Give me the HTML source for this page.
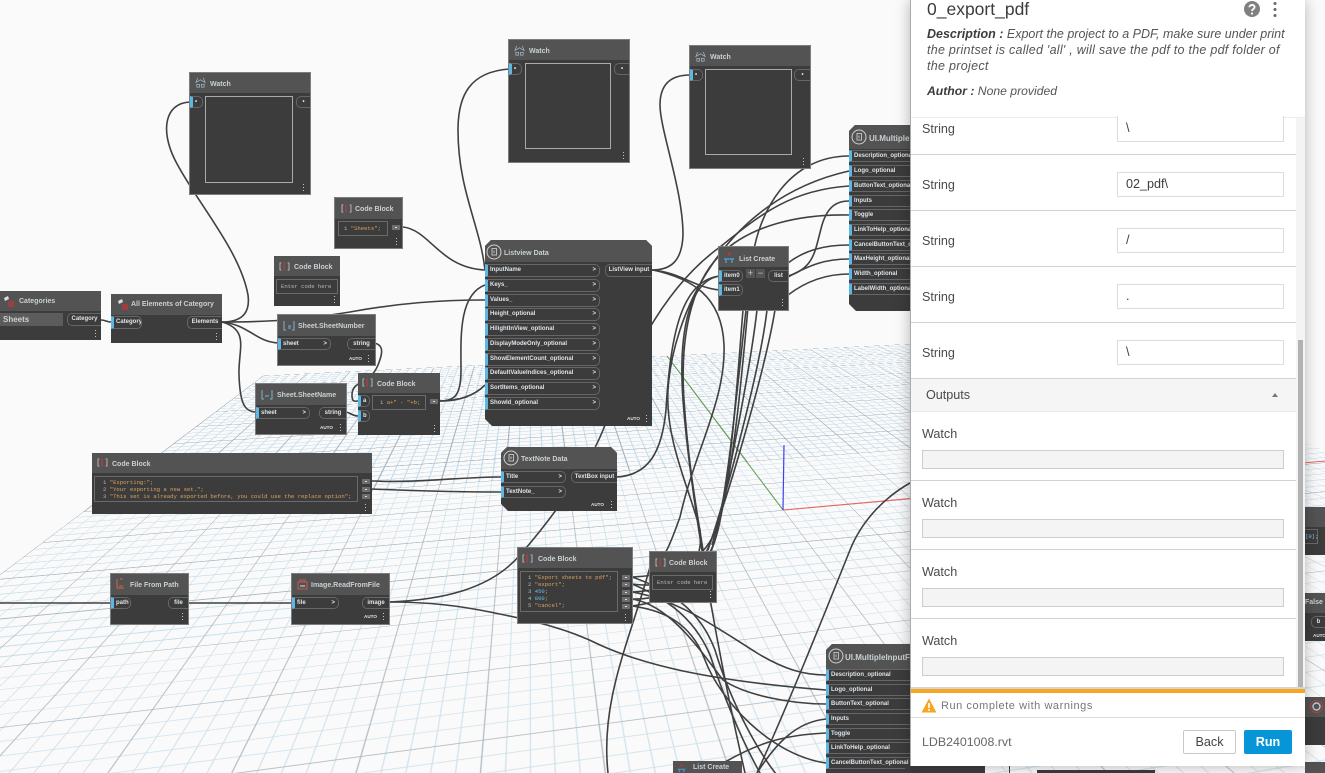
<!DOCTYPE html>
<html><head><meta charset="utf-8"><title>0_export_pdf</title>
<style>
html,body{margin:0;padding:0;width:1325px;height:773px;overflow:hidden;background:#fafafa;font-family:"Liberation Sans",sans-serif}
#root{position:relative;width:1325px;height:773px;overflow:hidden;background:#fafafa}
#grid{position:absolute;left:0;top:0;width:2000px;height:1750px;transform-origin:0 0;
transform:matrix3d(.46759,.014123,0,.00009543,-.26624,-.08741,0,-.00050234,0,0,1,0,263.03,375.78,0,1);background:#fafafa}
#grid div{position:absolute;left:0;width:2000px}
#g1{top:0;height:800px;background:linear-gradient(#a3b1bb 3px,transparent 3px) 0 0/100px 100px,linear-gradient(90deg,#a3b1bb 2px,transparent 2px) 0 0/100px 100px,linear-gradient(#c4dbe9 3px,transparent 3px) 0 0/20px 20px,linear-gradient(90deg,#c4dbe9 2px,transparent 2px) 0 0/20px 20px}
#g2{top:800px;height:400px;background:linear-gradient(#a6b4be 2.2px,transparent 2.2px) 0 0/100px 100px,linear-gradient(90deg,#a6b4be 1.5px,transparent 1.5px) 0 0/100px 100px,linear-gradient(#c8deeb 2.2px,transparent 2.2px) 0 0/20px 20px,linear-gradient(90deg,#c8deeb 1.5px,transparent 1.5px) 0 0/20px 20px}
#g3{top:1200px;height:550px;background:linear-gradient(#a9b6bf 1.4px,transparent 1.4px) 0 0/100px 100px,linear-gradient(90deg,#a9b6bf 1px,transparent 1px) 0 0/100px 100px,linear-gradient(#cde1ec 1.4px,transparent 1.4px) 0 0/20px 20px,linear-gradient(90deg,#cde1ec 1px,transparent 1px) 0 0/20px 20px}
svg.w{position:absolute;left:0;top:0}
.n,.h,.pl,.pr,.t,.d,.a,.box,.code,.out,.ic,.dd,.btn{position:absolute;display:block}
.n{background:#3c3c3c}
.s{outline:1px solid #7d7d7d;outline-offset:-.5px}
.c{clip-path:polygon(6px 0,calc(100% - 6px) 0,100% 6px,100% 100%,7px 100%,0 calc(100% - 7px),0 6px)}
.h{background:#535353}
.t{font-size:7px;font-weight:bold;color:#c9d0d4;white-space:nowrap;line-height:10px;margin-top:2px}
.pl,.pr{height:12px;box-sizing:border-box;border:1px solid #666;font-size:6px;font-weight:bold;color:#dde3e8;line-height:11px;white-space:nowrap;overflow:hidden}
.pl{border-left:3px solid #5db7e2;border-radius:0 5px 5px 0;padding-left:2px}
.pr{border-right:0;border-radius:5px 0 0 5px;text-align:center}
.pl u{position:absolute;right:3px;top:0;text-decoration:none}
.d{width:1.4px;height:1.4px;background:#c4c4c4;box-shadow:0 3px #c4c4c4,0 -3px #c4c4c4}
.a{font-size:4.6px;font-weight:bold;color:#dfe5ea;line-height:6px}
.box{box-sizing:border-box;border:1px solid #6a6a6a}
.wb{border:1px solid #aaa}
.code{font-family:"Liberation Mono",monospace;font-size:5.6px;line-height:7px;color:#dba35f;white-space:pre}
.code b{font-weight:normal;color:#b8b8b8}
.code em{font-style:normal;color:#5fc0ea}
.out{width:8px;height:5px;background:#6e6e6e}
.out:after{content:"";position:absolute;left:3px;top:2px;width:2px;height:1px;background:#ddd}
.ic{overflow:visible}
.dd{background:#5c5c5c;color:#d0d0d0;font-size:8px;font-weight:bold;line-height:14px}
.btn{background:#555;width:9px;height:9px;color:#ccc;font-size:9px;line-height:8px;text-align:center}
#panel{position:absolute;left:910px;top:0;width:395px;height:766px;background:#fff;border-left:1px solid #ababab;box-sizing:border-box;box-shadow:0 0 14px rgba(0,0,0,.28);color:#3c3c3c;overflow:hidden}
#panel div,#panel span{position:absolute;white-space:nowrap}
.sep{left:0;width:385px;height:1px;background:#d2d2d2}
.lb{left:11px;font-size:12.6px;line-height:16px;color:#4a4a4a}
.inp{left:206px;width:167px;height:25px;border:1px solid #dcdcdc;box-sizing:border-box;font-size:12.6px;line-height:23px;padding-left:8px;color:#3c3c3c;background:#fff}
.fld{left:11px;width:362px;height:19px;background:#f4f4f4;border:1px solid #cdcdcd;box-sizing:border-box}
.dl{left:16px;font-size:12.5px;line-height:16px;font-style:italic;color:#555}
</style></head><body><div id="root">
<div id="grid"><div id="g1"></div><div id="g2"></div><div id="g3"></div></div>
<svg class="w" width="1325" height="773" viewBox="0 0 1325 773" fill="none">
<path d="M783 510L667 356" stroke="#5f9e50" stroke-width="1"/>
<path d="M783 510L1325 461" stroke="#f2605c" stroke-width="1"/>
<path d="M783 510L784 445" stroke="#4040ee" stroke-width="1.2"/>
<g stroke="#404040" stroke-width="1.6">
<path d="M222 322C245 322 250 310 248 295C240 250 195 200 175 160C160 130 165 103 190 102"/>
<path d="M222 322C250 325 255 342 279 343"/>
<path d="M222 322C250 330 238 350 239 375C240 405 245 412 257 412"/>
<path d="M222 322C270 322 300 320 350 312C400 303 440 300 485 300"/>
<path d="M403 227C430 230 440 268 485 270"/>
<path d="M509 69C470 72 458 95 458 130C458 190 480 225 485 270"/>
<path d="M440 401C455 401 461 395 461 370C461 340 458 295 485 285"/>
<path d="M440 401C460 401 475 395 485 385"/>
<path d="M374 343C385 345 382 355 378 365C370 385 352 380 352 395C352 403 355 401 358 401"/>
<path d="M345 412C350 412 352 416 358 416"/>
<path d="M101 320C106 320 106 322 111 322"/>
<path d="M372 481C420 483 460 477 501 477"/>
<path d="M372 489C420 491 460 492 501 492"/>
<path d="M617 477C650 475 662 450 666 410C670 340 680 280 720 276"/>
<path d="M652 270C680 272 695 288 720 290"/>
<path d="M652 270C670 270 682 262 683 235C683 190 660 130 660 105C660 85 670 75 690 75"/>
<path d="M653 270C690 278 722 295 724 345C726 400 695 450 680 517C670 545 665 560 650 567C630 640 600 700 608 773"/>
<path d="M720 276C690 280 678 330 683 400C688 470 710 620 745 773"/>
<path d="M632 577C680 575 705 560 718 525C735 470 745 340 752 262C758 210 790 156 849 156"/>
<path d="M632 584C675 590 705 570 700 530C690 490 665 440 668 390C672 320 720 200 849 171"/>
<path d="M389 602C440 600 490 590 520 555C555 515 590 465 605 425C625 370 660 290 720 247C760 215 790 190 849 186"/>
<path d="M849 215C800 214 750 225 720 255C690 285 680 340 684 400C688 460 695 500 703 550C705 570 680 590 632 592"/>
<path d="M632 599C680 600 708 570 718 530C732 470 738 370 743 310"/>
<path d="M632 606C680 600 705 575 715 540C728 490 738 380 746 310"/>
<path d="M712 545C725 500 750 370 757 310"/>
<path d="M708 550C725 500 760 370 767 310"/>
<path d="M705 555C725 510 765 370 775 310"/>
<path d="M788 276C815 268 815 250 822 225C828 205 838 201 849 201"/>
<path d="M788 263C805 250 825 245 849 245"/>
<path d="M788 277C810 265 825 259 849 259"/>
<path d="M788 295C805 282 825 274 849 274"/>
<path d="M632 592C680 600 720 630 757 653C785 670 805 675 826 675"/>
<path d="M632 599C670 605 700 650 723 680C745 695 790 704 826 704"/>
<path d="M632 606C660 610 690 620 705 660C720 700 770 755 826 763"/>
<path d="M632 577C670 590 700 610 715 650C730 700 760 760 790 790"/>
<path d="M632 584C670 600 695 620 710 655C725 700 745 750 770 790"/>
<path d="M389 602C430 602 460 606 490 612C540 622 570 630 600 645C640 663 700 680 826 690"/>
<path d="M725 762C755 745 780 735 826 733"/>
<path d="M757 773C775 745 795 722 826 719"/>
<path d="M910 483C880 500 860 525 850 550C820 625 790 700 757 773"/>
<path d="M188 603H292"/>
<path d="M0 603H111"/>
</g>
<defs>
<symbol id="cb" viewBox="0 0 12 10"><path d="M2.5 1H1V9H2.5M9.5 1H11V9H9.5" stroke="#bdbdbd" fill="none"/><path d="M5.5 .5V9.5" stroke="#c23b3b" stroke-width="1.2"/></symbol>
<symbol id="wa" viewBox="0 0 12 12"><path d="M3 1L1 6L6 3L11 6L9 1M2 8H5V11H2ZM7 8H10V11H7Z" stroke="#9fb8c8" stroke-width=".8" fill="none"/></symbol>
<symbol id="ci" viewBox="0 0 16 16"><circle cx="8" cy="8" r="7" stroke="#d0d0d0" fill="none"/><path d="M6 4.5H10.5V11H6ZM8 6.5V9" stroke="#bbb" fill="none"/></symbol>
<symbol id="lc" viewBox="0 0 12 12"><path d="M6 0V4M4 2H8" stroke="#c33"/><path d="M1 7H11M3 7V11M9 7V11" stroke="#4a9ad4" stroke-width="1.4"/></symbol>
<symbol id="re" viewBox="0 0 12 12"><path d="M1 3L5 1L6 4L2 6Z" fill="#ddd"/><path d="M5 7H11M5 9H11M5 11H11" stroke="#c33" stroke-width="1.2"/></symbol>
</defs>
</svg>

<!-- Watch nodes -->
<div class="n s" style="left:190px;top:73px;width:120px;height:121px"></div><div class="h" style="left:190px;top:73px;width:120px;height:20px"></div>
<svg class="ic" style="left:195px;top:77px" width="11" height="11"><use href="#wa"/></svg><span class="t" style="left:210px;top:78px">Watch</span>
<span class="pl" style="left:190px;top:96px;width:13px">•</span><span class="pr" style="left:296px;top:96px;width:14px">•</span>
<div class="box wb" style="left:205px;top:96px;width:88px;height:87px"></div><span class="d" style="left:303px;top:187px"></span>

<div class="n s" style="left:509px;top:40px;width:120px;height:122px"></div><div class="h" style="left:509px;top:40px;width:120px;height:20px"></div>
<svg class="ic" style="left:514px;top:45px" width="11" height="11"><use href="#wa"/></svg><span class="t" style="left:529px;top:45px">Watch</span>
<span class="pl" style="left:509px;top:63px;width:13px">•</span><span class="pr" style="left:614px;top:63px;width:15px">•</span>
<div class="box wb" style="left:525px;top:63px;width:86px;height:86px"></div><span class="d" style="left:623px;top:155px"></span>

<div class="n s" style="left:690px;top:46px;width:120px;height:122px"></div><div class="h" style="left:690px;top:46px;width:120px;height:20px"></div>
<svg class="ic" style="left:695px;top:51px" width="11" height="11"><use href="#wa"/></svg><span class="t" style="left:710px;top:51px">Watch</span>
<span class="pl" style="left:690px;top:69px;width:13px">•</span><span class="pr" style="left:794px;top:69px;width:16px">•</span>
<div class="box wb" style="left:705px;top:69px;width:87px;height:86px"></div><span class="d" style="left:803px;top:161px"></span>

<!-- Categories -->
<div class="n" style="left:0;top:291px;width:101px;height:49px"></div><div class="h" style="left:0;top:291px;width:101px;height:20px"></div>
<svg class="ic" style="left:3px;top:295px" width="12" height="12"><use href="#re"/></svg><span class="t" style="left:19px;top:295px">Categories</span>
<span class="dd" style="left:0;top:313px;width:63px;height:13px;padding-left:3px;box-sizing:border-box">Sheets</span>
<span class="pr" style="left:67px;top:313px;width:34px;height:13px">Category</span><span class="d" style="left:95px;top:333px"></span>

<!-- All Elements -->
<div class="n" style="left:111px;top:294px;width:111px;height:49px"></div><div class="h" style="left:111px;top:294px;width:111px;height:21px"></div>
<svg class="ic" style="left:117px;top:298px" width="12" height="12"><use href="#re"/></svg><span class="t" style="left:131px;top:298px">All Elements of Category</span>
<span class="pl" style="left:111px;top:316px;width:31px;height:13px">Category</span><span class="pr" style="left:187px;top:316px;width:35px;height:13px">Elements</span><span class="d" style="left:216px;top:336px"></span>

<!-- Code Blocks upper -->
<div class="n s" style="left:335px;top:198px;width:67px;height:50px"></div><div class="h" style="left:335px;top:198px;width:67px;height:21px"></div>
<svg class="ic" style="left:341px;top:204px" width="11" height="9"><use href="#cb"/></svg><span class="t" style="left:355px;top:203px">Code Block</span>
<div class="box" style="left:338px;top:221px;width:50px;height:15px"></div><span class="code" style="left:344px;top:225px"><b>1</b> "Sheets";</span>
<span class="out" style="left:392px;top:225px"></span><span class="d" style="left:396px;top:241px"></span>

<div class="n" style="left:274px;top:256px;width:66px;height:50px"></div><div class="h" style="left:274px;top:256px;width:66px;height:20px"></div>
<svg class="ic" style="left:279px;top:262px" width="11" height="9"><use href="#cb"/></svg><span class="t" style="left:294px;top:261px">Code Block</span>
<div class="box" style="left:276px;top:279px;width:62px;height:15px"></div><span class="code" style="left:281px;top:283px"><b>Enter code here</b></span><span class="d" style="left:334px;top:299px"></span>

<!-- Sheet number/name -->
<div class="n s" style="left:278px;top:315px;width:97px;height:50px"></div><div class="h" style="left:278px;top:315px;width:97px;height:21px"></div>
<svg class="ic" style="left:283px;top:320px" width="12" height="11"><path d="M1 1V10H3M11 1V10H9M5 6H8M5 8H8" stroke="#7fb0d0" fill="none"/></svg><span class="t" style="left:298px;top:320px">Sheet.SheetNumber</span>
<span class="pl" style="left:278px;top:338px;width:53px">sheet<u>&gt;</u></span><span class="pr" style="left:347px;top:338px;width:28px">string</span>
<span class="a" style="left:349px;top:356px">AUTO</span><span class="d" style="left:368px;top:358px"></span>

<div class="n s" style="left:256px;top:384px;width:90px;height:50px"></div><div class="h" style="left:256px;top:384px;width:90px;height:21px"></div>
<svg class="ic" style="left:261px;top:389px" width="12" height="11"><path d="M1 1V10H3M11 1V10H9M4 7H8" stroke="#7fb0d0" fill="none"/></svg><span class="t" style="left:277px;top:389px">Sheet.SheetName</span>
<span class="pl" style="left:256px;top:407px;width:54px">sheet<u>&gt;</u></span><span class="pr" style="left:319px;top:407px;width:27px">string</span>
<span class="a" style="left:320px;top:425px">AUTO</span><span class="d" style="left:340px;top:427px"></span>

<div class="n" style="left:358px;top:373px;width:82px;height:62px"></div><div class="h" style="left:358px;top:373px;width:82px;height:20px"></div>
<svg class="ic" style="left:362px;top:378px" width="11" height="9"><use href="#cb"/></svg><span class="t" style="left:377px;top:378px">Code Block</span>
<span class="pl" style="left:358px;top:395px;width:12px;padding-left:2px">a</span><span class="pl" style="left:358px;top:410px;width:12px;padding-left:2px">b</span>
<div class="box" style="left:372px;top:395px;width:54px;height:15px"></div><span class="code" style="left:380px;top:399px"><b>1</b> a+" - "+b;</span>
<span class="out" style="left:430px;top:399px"></span><span class="d" style="left:434px;top:428px"></span>

<!-- ListView -->
<div class="n c" style="left:485px;top:240px;width:167px;height:186px"><div class="h" style="left:0;top:0;width:167px;height:22px"></div></div>
<svg class="ic" style="left:486px;top:244px" width="16" height="16"><use href="#ci"/></svg><span class="t" style="left:504px;top:247px">Listview Data</span>
<span class="pl" style="left:485px;top:264px;width:115px;height:13px">InputName<u>&gt;</u></span>
<span class="pl" style="left:485px;top:279px;width:115px;height:13px">Keys_<u>&gt;</u></span>
<span class="pl" style="left:485px;top:294px;width:115px;height:13px">Values_<u>&gt;</u></span>
<span class="pl" style="left:485px;top:308px;width:115px;height:13px">Height_optional<u>&gt;</u></span>
<span class="pl" style="left:485px;top:323px;width:115px;height:13px">HilightInView_optional<u>&gt;</u></span>
<span class="pl" style="left:485px;top:338px;width:115px;height:13px">DisplayModeOnly_optional<u>&gt;</u></span>
<span class="pl" style="left:485px;top:353px;width:115px;height:13px">ShowElementCount_optional<u>&gt;</u></span>
<span class="pl" style="left:485px;top:367px;width:115px;height:13px">DefaultValueIndices_optional<u>&gt;</u></span>
<span class="pl" style="left:485px;top:382px;width:115px;height:13px">SortItems_optional<u>&gt;</u></span>
<span class="pl" style="left:485px;top:397px;width:115px;height:13px">ShowId_optional<u>&gt;</u></span>
<span class="pr" style="left:605px;top:264px;width:47px;height:13px">ListView input</span>
<span class="a" style="left:627px;top:416px">AUTO</span><span class="d" style="left:646px;top:418px"></span>

<!-- List Create -->
<div class="n s" style="left:719px;top:247px;width:69px;height:63px"></div><div class="h" style="left:719px;top:247px;width:69px;height:20px"></div>
<svg class="ic" style="left:723px;top:252px" width="12" height="12"><use href="#lc"/></svg><span class="t" style="left:739px;top:253px">List Create</span>
<span class="pl" style="left:719px;top:270px;width:24px">item0</span><span class="pl" style="left:719px;top:284px;width:24px">item1</span>
<span class="btn" style="left:746px;top:269px">+</span><span class="btn" style="left:756px;top:269px">−</span>
<span class="pr" style="left:768px;top:270px;width:20px">list</span><span class="d" style="left:782px;top:302px"></span>

<!-- UI form top -->
<div class="n c" style="left:849px;top:125px;width:70px;height:186px"><div class="h" style="left:0;top:0;width:70px;height:24px"></div></div>
<svg class="ic" style="left:851px;top:129px" width="16" height="16"><use href="#ci"/></svg><span class="t" style="left:869px;top:132px;font-size:8px">UI.MultipleInputForm</span>
<span class="pl" style="left:849px;top:150px;width:70px">Description_optional</span>
<span class="pl" style="left:849px;top:165px;width:70px">Logo_optional</span>
<span class="pl" style="left:849px;top:180px;width:70px">ButtonText_optional</span>
<span class="pl" style="left:849px;top:195px;width:70px">Inputs</span>
<span class="pl" style="left:849px;top:209px;width:70px">Toggle</span>
<span class="pl" style="left:849px;top:224px;width:70px">LinkToHelp_optional</span>
<span class="pl" style="left:849px;top:239px;width:70px">CancelButtonText_optional</span>
<span class="pl" style="left:849px;top:253px;width:70px">MaxHeight_optional</span>
<span class="pl" style="left:849px;top:268px;width:70px">Width_optional</span>
<span class="pl" style="left:849px;top:283px;width:70px">LabelWidth_optional</span>

<!-- TextNote -->
<div class="n c" style="left:501px;top:447px;width:116px;height:64px"><div class="h" style="left:0;top:0;width:116px;height:22px"></div></div>
<svg class="ic" style="left:503px;top:450px" width="16" height="16"><use href="#ci"/></svg><span class="t" style="left:521px;top:453px">TextNote Data</span>
<span class="pl" style="left:501px;top:471px;width:65px">Title<u>&gt;</u></span><span class="pl" style="left:501px;top:486px;width:65px">TextNote_<u>&gt;</u></span>
<span class="pr" style="left:571px;top:471px;width:46px">TextBox input</span>
<span class="a" style="left:591px;top:502px">AUTO</span><span class="d" style="left:611px;top:504px"></span>

<!-- Code 3 -->
<div class="n" style="left:92px;top:453px;width:280px;height:61px"></div><div class="h" style="left:92px;top:453px;width:280px;height:20px"></div>
<svg class="ic" style="left:97px;top:458px" width="11" height="9"><use href="#cb"/></svg><span class="t" style="left:112px;top:458px">Code Block</span>
<div class="box" style="left:94px;top:476px;width:264px;height:26px"></div>
<span class="code" style="left:103px;top:479px"><b>1</b> "Exporting:";
<b>2</b> "Your exporting a new set.";
<b>3</b> "This set is already exported before, you could use the replace option";</span>
<span class="out" style="left:362px;top:479px"></span><span class="out" style="left:362px;top:487px"></span><span class="out" style="left:362px;top:494px"></span><span class="d" style="left:365px;top:507px"></span>

<!-- File -->
<div class="n s" style="left:111px;top:574px;width:77px;height:50px"></div><div class="h" style="left:111px;top:574px;width:77px;height:21px"></div>
<svg class="ic" style="left:115px;top:578px" width="11" height="12"><path d="M2 1V10H9M5 1H8M4 8H8" stroke="#c64" fill="none"/></svg><span class="t" style="left:130px;top:579px">File From Path</span>
<span class="pl" style="left:111px;top:597px;width:20px">path</span><span class="pr" style="left:168px;top:597px;width:20px">file</span><span class="d" style="left:182px;top:616px"></span>

<div class="n s" style="left:292px;top:574px;width:97px;height:50px"></div><div class="h" style="left:292px;top:574px;width:97px;height:21px"></div>
<svg class="ic" style="left:297px;top:579px" width="11" height="11"><path d="M1 3H10V10H1ZM3 3V1H8V3" stroke="#c55" fill="none"/><path d="M3 7H8" stroke="#ddd"/></svg><span class="t" style="left:311px;top:579px">Image.ReadFromFile</span>
<span class="pl" style="left:292px;top:597px;width:47px">file<u>&gt;</u></span><span class="pr" style="left:362px;top:597px;width:27px">image</span>
<span class="a" style="left:364px;top:614px">AUTO</span><span class="d" style="left:383px;top:616px"></span>

<!-- Code 5 -->
<div class="n s" style="left:518px;top:548px;width:114px;height:75px"></div><div class="h" style="left:518px;top:548px;width:114px;height:20px"></div>
<svg class="ic" style="left:522px;top:554px" width="11" height="9"><use href="#cb"/></svg><span class="t" style="left:538px;top:553px">Code Block</span>
<div class="box" style="left:520px;top:571px;width:98px;height:41px"></div>
<span class="code" style="left:528px;top:574px"><b>1</b> "Export sheets to pdf";
<b>2</b> "export";
<b>3</b> <em>450</em>;
<b>4</b> <em>800</em>;
<b>5</b> "cancel";</span>
<span class="out" style="left:622px;top:575px"></span><span class="out" style="left:622px;top:582px"></span><span class="out" style="left:622px;top:590px"></span><span class="out" style="left:622px;top:597px"></span><span class="out" style="left:622px;top:604px"></span><span class="d" style="left:625px;top:617px"></span>

<div class="n s" style="left:650px;top:552px;width:66px;height:50px"></div><div class="h" style="left:650px;top:552px;width:66px;height:20px"></div>
<svg class="ic" style="left:655px;top:558px" width="11" height="9"><use href="#cb"/></svg><span class="t" style="left:669px;top:557px">Code Block</span>
<div class="box" style="left:652px;top:575px;width:61px;height:15px"></div><span class="code" style="left:657px;top:579px"><b>Enter code here</b></span><span class="d" style="left:710px;top:594px"></span>

<!-- UI form bottom -->
<div class="n" style="left:826px;top:644px;width:95px;height:129px;clip-path:polygon(6px 0,calc(100% - 6px) 0,100% 6px,100% 100%,0 100%,0 6px)"><div class="h" style="left:0;top:0;width:95px;height:25px"></div></div>
<svg class="ic" style="left:828px;top:648px" width="16" height="16"><use href="#ci"/></svg><span class="t" style="left:845px;top:651px;font-size:8px">UI.MultipleInputForm</span>
<span class="pl" style="left:826px;top:669px;width:95px">Description_optional</span>
<span class="pl" style="left:826px;top:684px;width:95px">Logo_optional</span>
<span class="pl" style="left:826px;top:698px;width:95px">ButtonText_optional</span>
<span class="pl" style="left:826px;top:713px;width:95px">Inputs</span>
<span class="pl" style="left:826px;top:728px;width:95px">Toggle</span>
<span class="pl" style="left:826px;top:742px;width:95px">LinkToHelp_optional</span>
<span class="pl" style="left:826px;top:757px;width:95px">CancelButtonText_optional</span>

<div class="n" style="left:673px;top:761px;width:69px;height:12px"><div class="h" style="left:0;top:0;width:69px;height:12px"></div></div>
<svg class="ic" style="left:677px;top:764px" width="9" height="9" viewBox="0 0 12 12"><use href="#lc"/></svg><span class="t" style="left:693px;top:763px;margin-top:0">List Create</span>

<!-- right fragments and below panel -->
<div class="n" style="left:1305px;top:507px;width:20px;height:48px"></div><div class="h" style="left:1305px;top:507px;width:20px;height:20px"></div>
<div class="box" style="left:1300px;top:529px;width:18px;height:15px"></div><span class="code" style="left:1305px;top:533px;color:#8cc4e4">[0];</span>
<div class="n" style="left:1305px;top:593px;width:20px;height:48px"></div><div class="h" style="left:1305px;top:593px;width:20px;height:20px"></div>
<span class="t" style="left:1305px;top:596px">False</span><span class="pr" style="left:1311px;top:616px;width:14px">b</span><span class="a" style="left:1313px;top:633px">AUTO</span>
<div class="n" style="left:1305px;top:697px;width:20px;height:48px"></div><div class="h" style="left:1305px;top:697px;width:20px;height:20px"></div>
<svg class="ic" style="left:1309px;top:699px" width="15" height="15"><circle cx="7.5" cy="7.5" r="6" stroke="#b84040" fill="none"/><circle cx="7.5" cy="7.5" r="3.5" stroke="#bcc8d0" fill="none" stroke-width="1.4"/></svg>
<div class="n" style="left:1305px;top:762px;width:20px;height:11px"></div><div class="h" style="left:1305px;top:762px;width:20px;height:11px"></div>
<div class="n" style="left:905px;top:766px;width:80px;height:7px"></div>
<div class="n" style="left:1037px;top:770px;width:118px;height:3px"></div>
<div class="n" style="left:1009px;top:766px;width:1px;height:7px"></div>

<!-- Panel -->
<div id="panel">
<div style="left:16px;top:-2px;font-size:17.5px;line-height:22px;color:#3c3c3c">0_export_pdf</div>
<svg style="position:absolute;left:333px;top:1px" width="16" height="16"><circle cx="8" cy="8" r="8" fill="#808080"/><path d="M5.4 6.3C5.4 3.2 10.6 3.2 10.6 6.1C10.6 8 8 7.9 8 10" stroke="#fff" stroke-width="1.8" fill="none"/><circle cx="8" cy="12.5" r="1.1" fill="#fff"/></svg>
<svg style="position:absolute;left:360px;top:1px" width="8" height="17"><circle cx="4" cy="2.5" r="1.5" fill="#666"/><circle cx="4" cy="8.5" r="1.5" fill="#666"/><circle cx="4" cy="14.5" r="1.5" fill="#666"/></svg>
<div class="dl" style="top:26px"><b style="color:#3c3c3c">Description :</b> Export the project to a PDF, make sure under print</div>
<div class="dl" style="top:42px;letter-spacing:.26px">the printset is called 'all' , will save the pdf to the pdf folder of</div>
<div class="dl" style="top:58px;letter-spacing:.3px">the project</div>
<div class="dl" style="top:83px;font-size:12.2px"><b style="color:#3c3c3c">Author :</b> None provided</div>
<div style="left:0;top:117px;width:394px;height:1px;background:#ececec"></div>
<div style="left:385px;top:118px;width:9px;height:570px;background:#f4f4f4"></div>
<div style="left:387px;top:340px;width:5px;height:347px;background:#b2b2b2"></div>

<div class="lb" style="top:121px">String</div><div class="inp" style="top:116px;height:26px;border-top:0;line-height:24px">\</div><div class="sep" style="top:154px"></div>
<div class="lb" style="top:177px">String</div><div class="inp" style="top:172px">02_pdf\</div><div class="sep" style="top:210px"></div>
<div class="lb" style="top:233px">String</div><div class="inp" style="top:228px">/</div><div class="sep" style="top:266px"></div>
<div class="lb" style="top:289px">String</div><div class="inp" style="top:284px">.</div><div class="sep" style="top:322px"></div>
<div class="lb" style="top:345px">String</div><div class="inp" style="top:340px">\</div><div class="sep" style="top:378px"></div>

<div style="left:0;top:379px;width:385px;height:32px;background:#f5f5f5"></div>
<div style="left:15px;top:387px;font-size:12.6px;line-height:16px;color:#4a4a4a">Outputs</div>
<div style="left:361px;top:393px;width:0;height:0;border:3.5px solid transparent;border-top:0;border-bottom:4px solid #777"></div>
<div style="left:0;top:411px;width:385px;height:1px;background:#ebebeb"></div>

<div class="lb" style="top:426px">Watch</div><div class="fld" style="top:450px"></div><div class="sep" style="top:480px"></div>
<div class="lb" style="top:495px">Watch</div><div class="fld" style="top:519px"></div><div class="sep" style="top:549px"></div>
<div class="lb" style="top:564px">Watch</div><div class="fld" style="top:588px"></div><div class="sep" style="top:618px"></div>
<div class="lb" style="top:633px">Watch</div><div class="fld" style="top:657px"></div>

<div style="left:0;top:687px;width:394px;height:2px;background:#d4d4d4"></div>
<div style="left:0;top:689px;width:394px;height:4px;background:#f5a623"></div>
<svg style="position:absolute;left:10px;top:698px" width="16" height="15"><path d="M8 .5L15.5 14.5H.5Z" fill="#f5a623"/><path d="M8 5V10" stroke="#fff" stroke-width="1.6"/><circle cx="8" cy="12" r="1" fill="#fff"/></svg>
<div style="left:30px;top:699px;font-size:11px;line-height:14px;color:#777;letter-spacing:.55px">Run complete with warnings</div>
<div style="left:0;top:717px;width:394px;height:1px;background:#dcdcdc"></div>
<div style="left:11px;top:734px;font-size:12.4px;line-height:16px;color:#666">LDB2401008.rvt</div>
<div style="left:272px;top:730px;width:53px;height:24px;box-sizing:border-box;border:1px solid #c8c8c8;border-radius:2px;text-align:center;font-size:12.6px;line-height:22px;color:#444">Back</div>
<div style="left:333px;top:730px;width:48px;height:24px;background:#0696d7;border-radius:2px;text-align:center;font-size:12.6px;font-weight:bold;line-height:24px;color:#fff">Run</div>
</div>
</div></body></html>
